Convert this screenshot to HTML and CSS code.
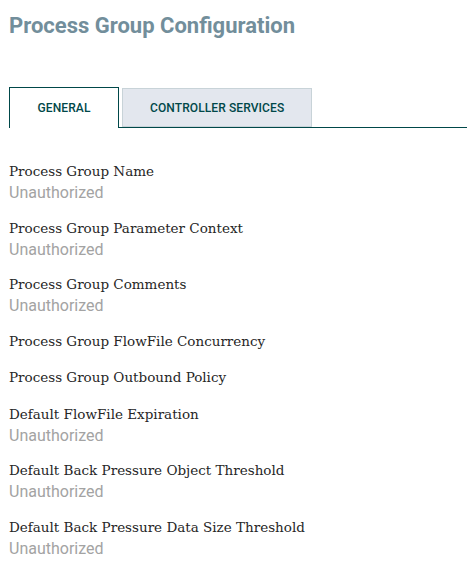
FILE: index.html
```html
<!DOCTYPE html>
<html>
<head>
<meta charset="utf-8">
<link rel="stylesheet" href="styles.css">
</head>
<body>
<div class="page">
  <h1 class="title">Process Group Configuration</h1>
  <div class="tabs">
    <div class="tab tab-active">General</div>
    <div class="tab">Controller Services</div>
  </div>
  <div class="settings">
    <div class="setting">
      <div class="label">Process Group Name</div>
      <div class="value">Unauthorized</div>
    </div>
    <div class="setting">
      <div class="label">Process Group Parameter Context</div>
      <div class="value">Unauthorized</div>
    </div>
    <div class="setting">
      <div class="label">Process Group Comments</div>
      <div class="value">Unauthorized</div>
    </div>
    <div class="setting">
      <div class="label">Process Group FlowFile Concurrency</div>
    </div>
    <div class="setting">
      <div class="label">Process Group Outbound Policy</div>
    </div>
    <div class="setting">
      <div class="label">Default FlowFile Expiration</div>
      <div class="value">Unauthorized</div>
    </div>
    <div class="setting">
      <div class="label">Default Back Pressure Object Threshold</div>
      <div class="value">Unauthorized</div>
    </div>
    <div class="setting">
      <div class="label">Default Back Pressure Data Size Threshold</div>
      <div class="value">Unauthorized</div>
    </div>
  </div>
</div>
</body>
</html>
```
FILE: styles.css
```css
html, body {
  margin: 0;
  padding: 0;
  background: #ffffff;
}
.page {
  padding: 0 0 0 9px;
  font-family: Roboto, "Noto Sans", sans-serif;
}
.title {
  margin: 13px 0 0;
  font-size: 22px;
  line-height: 26px;
  font-weight: 700;
  color: #728e9b;
}
.tabs {
  margin-top: 48px;
  display: flex;
  align-items: flex-end;
  gap: 3px;
  height: 40px;
  border-bottom: 1px solid #004849;
}
.tab {
  box-sizing: border-box;
  height: 39px;
  padding: 0 27px 0 27px;
  display: flex;
  align-items: center;
  justify-content: center;
  background: #e3e7ee;
  border: 1px solid #c8d3d8;
  color: #004849;
  font-size: 12px;
  font-weight: 500;
  letter-spacing: 0.1px;
  text-transform: uppercase;
}
.tab-active {
  height: 41px;
  width: 110px;
  padding: 0;
  margin-bottom: -1px;
  background: #ffffff;
  border: 1px solid #004849;
  border-bottom: 0;
}
.settings {
  padding-top: 34px;
}
.setting {
  margin-bottom: 17.5px;
}
.label {
  font-family: "Roboto Slab", "DejaVu Serif", serif;
  font-size: 13.5px;
  line-height: 19px;
  color: #262626;
}
.value {
  font-size: 16px;
  line-height: 24px;
  margin-bottom: -4px;
  color: #a3a3a3;
}
```
